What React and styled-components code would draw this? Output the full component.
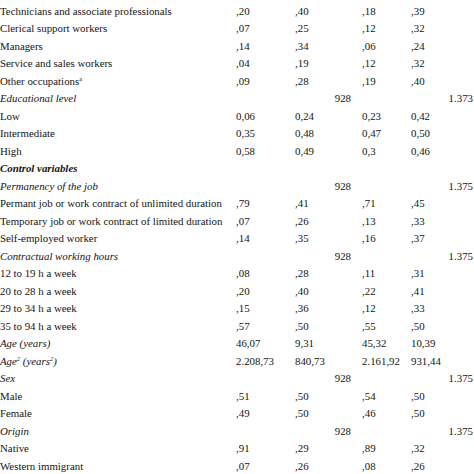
import React from "react";
import styled, { createGlobalStyle } from "styled-components";

const Global = createGlobalStyle`
  html, body { margin: 0; padding: 0; background: #fff; }
  body { font-family: "Liberation Serif", "Times New Roman", serif; color: #141414; }
`;

const Table = styled.div`
  width: 474px;
  padding-top: 2.8px;
  font-family: "Liberation Serif", "Times New Roman", serif;
  font-size: 10.85px;
`;

const Row = styled.div`
  display: grid;
  grid-template-columns: 235px 59px 56px 11px 49px 1fr;
  height: 17.5px;
  line-height: 17.5px;
  padding-right: 1px;
  padding-left: 1px;
  white-space: nowrap;
`;

const Label = styled.div`
  font-style: ${(p) => (p.$italic || p.$bold ? "italic" : "normal")};
  font-weight: ${(p) => (p.$bold ? 700 : 400)};
  margin-left: -1px;
`;

const Cell = styled.div``;

const NCell = styled.div`
  justify-self: end;
  grid-column: ${(p) => p.$col};
`;

const Sup = styled.sup`
  font-size: 6.5px;
  line-height: 0;
  vertical-align: 4px;
`;

const rows = [
  { l: "Technicians and associate professionals", v: [",20", ",40", ",18", ",39"] },
  { l: "Clerical support workers", v: [",07", ",25", ",12", ",32"] },
  { l: "Managers", v: [",14", ",34", ",06", ",24"] },
  { l: "Service and sales workers", v: [",04", ",19", ",12", ",32"] },
  { l: "Other occupations", sup: "a", v: [",09", ",28", ",19", ",40"] },
  { l: "Educational level", i: true, n: ["928", "1.373"] },
  { l: "Low", v: ["0,06", "0,24", "0,23", "0,42"] },
  { l: "Intermediate", v: ["0,35", "0,48", "0,47", "0,50"] },
  { l: "High", v: ["0,58", "0,49", "0,3", "0,46"] },
  { l: "Control variables", b: true },
  { l: "Permanency of the job", i: true, n: ["928", "1.375"] },
  { l: "Permant job or work contract of unlimited duration", v: [",79", ",41", ",71", ",45"] },
  { l: "Temporary job or work contract of limited duration", v: [",07", ",26", ",13", ",33"] },
  { l: "Self-employed worker", v: [",14", ",35", ",16", ",37"] },
  { l: "Contractual working hours", i: true, n: ["928", "1.375"] },
  { l: "12 to 19 h a week", v: [",08", ",28", ",11", ",31"] },
  { l: "20 to 28 h a week", v: [",20", ",40", ",22", ",41"] },
  { l: "29 to 34 h a week", v: [",15", ",36", ",12", ",33"] },
  { l: "35 to 94 h a week", v: [",57", ",50", ",55", ",50"] },
  { l: "Age (years)", i: true, v: ["46,07", "9,31", "45,32", "10,39"] },
  { l: "Age", i: true, age2: true, v: ["2.208,73", "840,73", "2.161,92", "931,44"] },
  { l: "Sex", i: true, n: ["928", "1.375"] },
  { l: "Male", v: [",51", ",50", ",54", ",50"] },
  { l: "Female", v: [",49", ",50", ",46", ",50"] },
  { l: "Origin", i: true, n: ["928", "1.375"] },
  { l: "Native", v: [",91", ",29", ",89", ",32"] },
  { l: "Western immigrant", v: [",07", ",26", ",08", ",26"] },
];

export default function App() {
  return (
    <>
      <Global />
      <Table>
        {rows.map((r, idx) => (
          <Row key={idx}>
            <Label $italic={r.i} $bold={r.b}>
              {r.age2 ? (
                <>
                  Age<Sup>2</Sup> (years<Sup>2</Sup>)
                </>
              ) : (
                <>
                  {r.l}
                  {r.sup && <Sup>{r.sup}</Sup>}
                </>
              )}
            </Label>
            {r.v && (
              <>
                <Cell>{r.v[0]}</Cell>
                <Cell>{r.v[1]}</Cell>
                <Cell />
                <Cell>{r.v[2]}</Cell>
                <Cell>{r.v[3]}</Cell>
              </>
            )}
            {r.n && (
              <>
                <NCell $col={3}>{r.n[0]}</NCell>
                <NCell $col={6}>{r.n[1]}</NCell>
              </>
            )}
          </Row>
        ))}
      </Table>
    </>
  );
}
